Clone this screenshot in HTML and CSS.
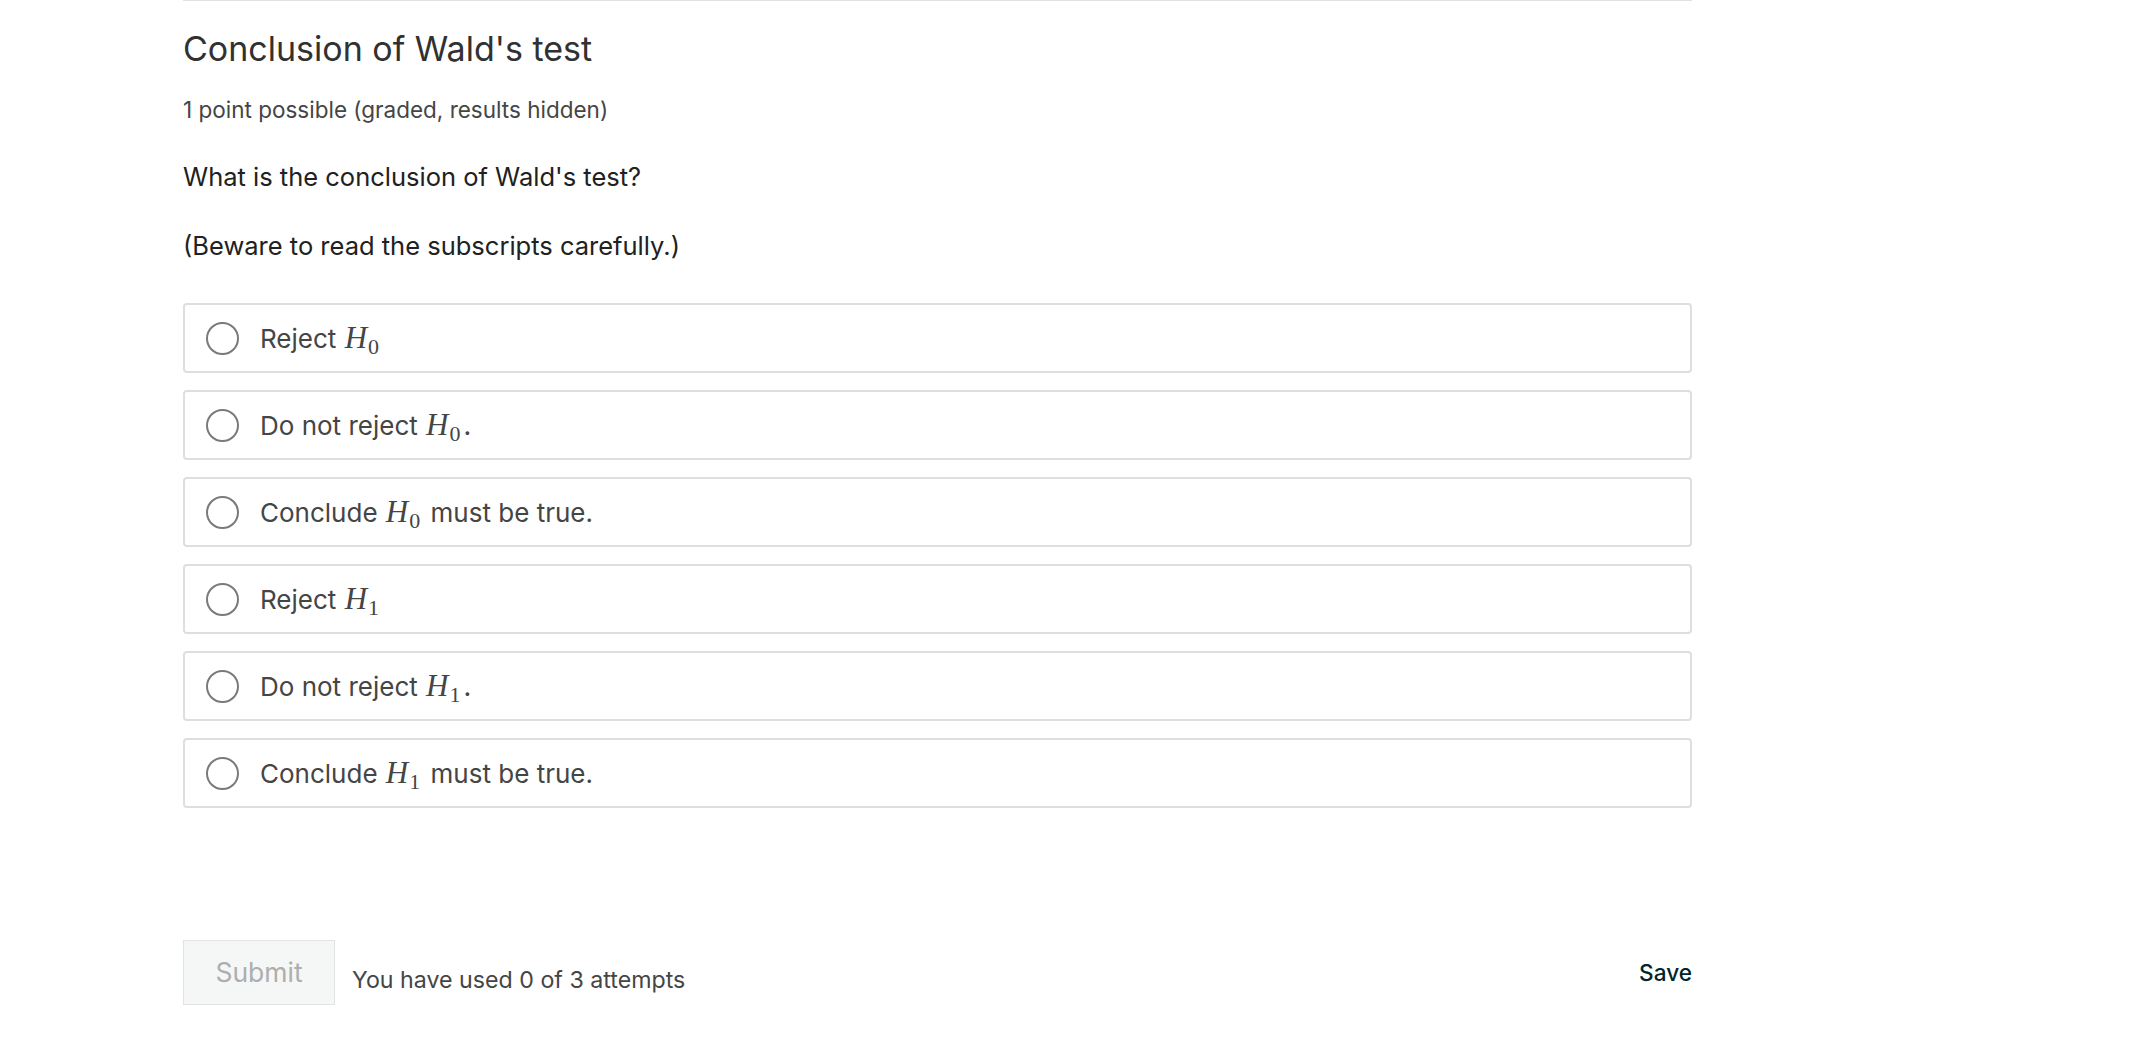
FILE: index.html
```html
<!DOCTYPE html>
<html lang="en">
<head>
<meta charset="utf-8">
<title>Conclusion of Wald's test</title>
<link rel="stylesheet" href="styles.css">
</head>
<body>
<main class="problem">
  <h3 class="title">Conclusion of Wald's test</h3>
  <div class="meta">1 point possible (graded, results hidden)</div>
  <p class="q">What is the conclusion of Wald's test?</p>
  <p class="q">(Beware to read the subscripts carefully.)</p>
  <div class="choices">
    <label class="choice"><span class="radio"></span><span class="txt">Reject <span class="math"><i>H</i><sub>0</sub></span></span></label>
    <label class="choice"><span class="radio"></span><span class="txt">Do not reject <span class="math"><i>H</i><sub>0</sub>.</span></span></label>
    <label class="choice"><span class="radio"></span><span class="txt">Conclude <span class="math"><i>H</i><sub>0</sub></span> must be true.</span></label>
    <label class="choice"><span class="radio"></span><span class="txt">Reject <span class="math"><i>H</i><sub>1</sub></span></span></label>
    <label class="choice"><span class="radio"></span><span class="txt">Do not reject <span class="math"><i>H</i><sub>1</sub>.</span></span></label>
    <label class="choice"><span class="radio"></span><span class="txt">Conclude <span class="math"><i>H</i><sub>1</sub></span> must be true.</span></label>
  </div>
  <div class="actions">
    <div class="left">
      <button class="submit" disabled>Submit</button>
      <span class="attempts">You have used 0 of 3 attempts</span>
    </div>
    <button class="save">Save</button>
  </div>
</main>
</body>
</html>
```
FILE: styles.css
```css
html, body {
  margin: 0;
  padding: 0;
  background: #fff;
}
body {
  font-family: Inter, "Noto Sans", sans-serif;
  color: #454545;
}
.problem {
  margin-left: 183px;
  width: 1509px;
  border-top: 1px solid #e1e1e1;
}
.title {
  margin: 27px 0 0;
  font-size: 34px;
  line-height: 41px;
  font-weight: 400;
  color: #313131;
}
.meta {
  margin-top: 25px;
  font-size: 22.5px;
  line-height: 32px;
  color: #454545;
}
.q {
  margin: 33px 0 0;
  font-size: 25.5px;
  line-height: 36px;
  color: #212121;
}
.choices {
  margin-top: 39px;
  display: flex;
  flex-direction: column;
  gap: 17px;
}
.choice {
  box-sizing: border-box;
  height: 70px;
  border: 2px solid #dedede;
  border-radius: 4px;
  display: flex;
  align-items: center;
  padding-left: 21px;
  gap: 21px;
  font-size: 26px;
  color: #454545;
}
.radio {
  box-sizing: border-box;
  width: 33px;
  height: 33px;
  border: 2px solid #7a7a7a;
  border-radius: 50%;
  flex: none;
}
.math {
  font-family: "Liberation Serif", "Times New Roman", serif;
  font-size: 31px;
  white-space: nowrap;
}
.math i {
  font-style: italic;
  margin-left: 1px;
}
.math sub {
  font-size: 22px;
  vertical-align: -6px;
  line-height: 0;
  margin-left: 1px;
  margin-right: 3px;
}
.actions {
  margin-top: 132px;
  display: flex;
  justify-content: space-between;
  align-items: flex-start;
}
.left {
  display: flex;
  align-items: center;
  gap: 17px;
}
.submit {
  box-sizing: border-box;
  width: 152px;
  height: 65px;
  background: #f5f6f6;
  border: 1px solid #e3e3e3;
  border-radius: 0;
  font-family: Inter, "Noto Sans", sans-serif;
  font-size: 26.5px;
  color: #aeaeae;
  padding: 0 0 2px;
}
.attempts {
  font-size: 23.2px;
  color: #454545;
  padding-top: 14px;
}
.save {
  background: none;
  border: none;
  padding: 0;
  margin-top: 20px;
  font-family: Inter, "Noto Sans", sans-serif;
  font-size: 22.6px;
  font-weight: 500;
  color: #00262b;
  line-height: 26px;
}
```
